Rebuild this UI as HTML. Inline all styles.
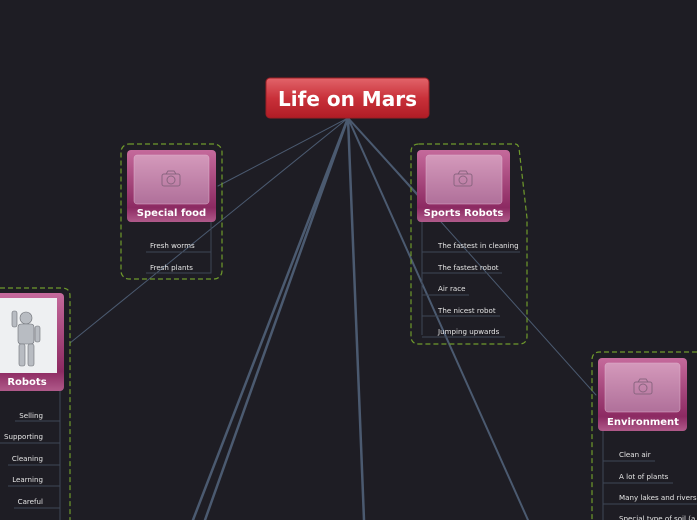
<!DOCTYPE html>
<html><head><style>
html,body{margin:0;padding:0;background:#1e1d24;width:697px;height:520px;overflow:hidden}
svg{display:block}
text{font-family:"DejaVu Sans","Liberation Sans",sans-serif}
.it{font-size:7.1px;fill:#e6e6e6}
.lb{font-size:10px;font-weight:bold;fill:#fff}
</style></head><body>
<svg width="697" height="520" viewBox="0 0 697 520">
<defs>
<linearGradient id="red" x1="0" y1="0" x2="0" y2="1"><stop offset="0" stop-color="#e2646a"/><stop offset="0.5" stop-color="#c9313a"/><stop offset="1" stop-color="#b01c25"/></linearGradient>
<linearGradient id="pink" x1="0" y1="0" x2="0" y2="1"><stop offset="0" stop-color="#c56a9c"/><stop offset="0.8" stop-color="#8c2a62"/><stop offset="1" stop-color="#b05a8a"/></linearGradient>
<linearGradient id="img" x1="0" y1="0" x2="0" y2="1"><stop offset="0" stop-color="#d499bb"/><stop offset="1" stop-color="#b0709a"/></linearGradient>
</defs>
<g stroke="#4b5a70" fill="none" stroke-linecap="round">
<line x1="348" y1="118" x2="218" y2="186" stroke-width="1"/>
<line x1="348" y1="118" x2="70" y2="343" stroke-width="1"/>
<line x1="348" y1="118" x2="193" y2="520" stroke-width="2.5"/>
<line x1="348" y1="118" x2="205" y2="520" stroke-width="2.5"/>
<line x1="348" y1="118" x2="364" y2="520" stroke-width="2.5"/>
<line x1="348" y1="118" x2="528" y2="520" stroke-width="2"/>
<line x1="348" y1="118" x2="418" y2="195" stroke-width="2"/>
<line x1="348" y1="118" x2="596" y2="395" stroke-width="1"/>
</g>
<g stroke="#6f9a2c" stroke-width="1.2" fill="none" stroke-dasharray="5,3">
<rect x="121" y="144" width="101" height="135" rx="8"/>
<path d="M419 144 H515 Q518 144 519 148 L527 218 V336 Q527 344 519 344 H419 Q411 344 411 336 V152 Q411 144 419 144Z"/>
<path d="M0 288 H62 Q70 288 70 296 V520"/>
<path d="M697 352 H600 Q592 352 592 360 V520"/>
</g>
<g stroke="#3e4756" stroke-width="1" fill="none">
<path d="M211 222 V273 H146 M146 252 H211"/>
<path d="M422 222 V335 M422 252 H520 M422 273 H502 M422 295 H469 M422 316 H500 M422 337 H505"/>
<path d="M60 391 V520 M15 421 H60 M0 443 H60 M8 465 H60 M8 486 H60 M14 508 H60"/>
<path d="M603 431 V520 M603 461 H655 M603 483 H673 M603 504 H697"/>
</g>
<rect x="266" y="78" width="163" height="40" rx="4" fill="url(#red)" stroke="#9b1e25"/>
<text x="347.5" y="106" text-anchor="middle" font-size="20" font-weight="bold" fill="#fff">Life on Mars</text>
<rect x="127" y="150" width="89" height="72" rx="4" fill="url(#pink)"/>
<rect x="134" y="155" width="75" height="49" rx="3" fill="url(#img)" stroke="#e0b0cc" stroke-width="0.5"/>
<g stroke="#8a6580" fill="none" stroke-width="1"><rect x="162" y="174" width="18" height="12" rx="2"/><circle cx="171" cy="180" r="4"/><path d="M166 174 l2-3 h6 l2 3"/></g>
<text class="lb" x="171.5" y="216" text-anchor="middle">Special food</text>
<text class="it" x="150" y="248">Fresh worms</text>
<text class="it" x="150" y="270">Fresh plants</text>
<rect x="417" y="150" width="93" height="72" rx="4" fill="url(#pink)"/>
<rect x="426" y="155" width="76" height="49" rx="3" fill="url(#img)" stroke="#e0b0cc" stroke-width="0.5"/>
<g stroke="#8a6580" fill="none" stroke-width="1"><rect x="454" y="174" width="18" height="12" rx="2"/><circle cx="463" cy="180" r="4"/><path d="M458 174 l2-3 h6 l2 3"/></g>
<text class="lb" x="463.5" y="216" text-anchor="middle">Sports Robots</text>
<text class="it" x="438" y="248">The fastest in cleaning</text>
<text class="it" x="438" y="270">The fastest robot</text>
<text class="it" x="438" y="291">Air race</text>
<text class="it" x="438" y="313">The nicest robot</text>
<text class="it" x="438" y="334">Jumping upwards</text>
<rect x="-10" y="293" width="74" height="98" rx="4" fill="url(#pink)"/>
<rect x="0" y="298" width="57" height="75" fill="#eef0f2"/>
<g fill="#b8bcc2" stroke="#6d7076" stroke-width="0.6">
<circle cx="26" cy="318" r="6"/><rect x="18" y="324" width="16" height="20" rx="3"/>
<rect x="12" y="311" width="5" height="16" rx="2"/><rect x="35" y="326" width="5" height="16" rx="2"/>
<rect x="19" y="344" width="6" height="22" rx="2"/><rect x="28" y="344" width="6" height="22" rx="2"/>
</g>
<text class="lb" x="27" y="385" text-anchor="middle">Robots</text>
<g class="it" text-anchor="end">
<text x="43" y="418">Selling</text><text x="43" y="439">Supporting</text><text x="43" y="461">Cleaning</text><text x="43" y="482">Learning</text><text x="43" y="504">Careful</text>
</g>
<rect x="598" y="358" width="89" height="73" rx="4" fill="url(#pink)"/>
<rect x="605" y="363" width="75" height="49" rx="3" fill="url(#img)" stroke="#e0b0cc" stroke-width="0.5"/>
<g stroke="#8a6580" fill="none" stroke-width="1"><rect x="634" y="382" width="18" height="12" rx="2"/><circle cx="643" cy="388" r="4"/><path d="M638 382 l2-3 h6 l2 3"/></g>
<text class="lb" x="643" y="425" text-anchor="middle">Environment</text>
<text class="it" x="619" y="457">Clean air</text>
<text class="it" x="619" y="479">A lot of plants</text>
<text class="it" x="619" y="500">Many lakes and rivers</text>
<text class="it" x="619" y="521">Special type of soil (a</text>
</svg>
</body></html>
